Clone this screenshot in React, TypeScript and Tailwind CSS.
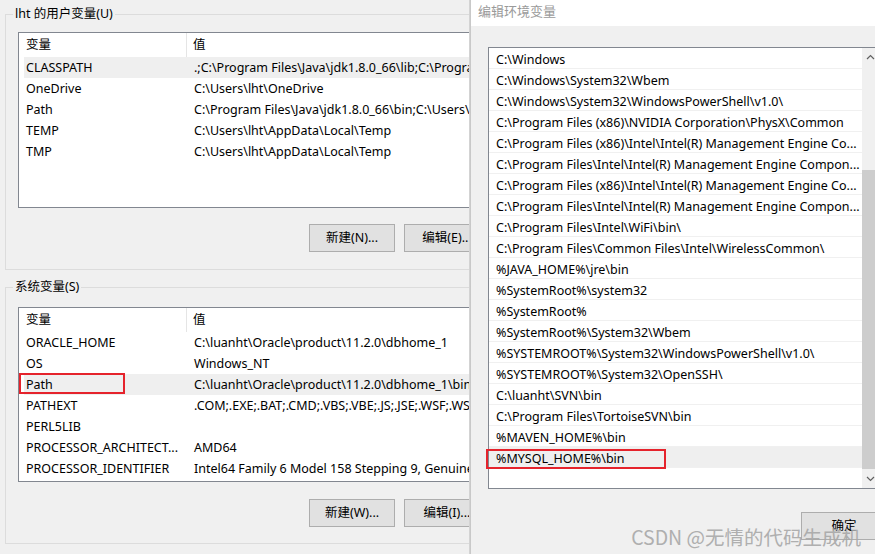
import React from "react";

const FONT = "font-['Noto_Sans','Noto_Sans_CJK_SC',sans-serif]";

type Row = [string, string];

const userVars: Row[] = [
  ["CLASSPATH", ".;C:\\Program Files\\Java\\jdk1.8.0_66\\lib;C:\\Program Files\\Java\\jdk1.8.0_66\\lib\\tools.jar"],
  ["OneDrive", "C:\\Users\\lht\\OneDrive"],
  ["Path", "C:\\Program Files\\Java\\jdk1.8.0_66\\bin;C:\\Users\\lht\\AppData\\Local\\Microsoft"],
  ["TEMP", "C:\\Users\\lht\\AppData\\Local\\Temp"],
  ["TMP", "C:\\Users\\lht\\AppData\\Local\\Temp"],
];

const sysVars: Row[] = [
  ["ORACLE_HOME", "C:\\luanht\\Oracle\\product\\11.2.0\\dbhome_1"],
  ["OS", "Windows_NT"],
  ["Path", "C:\\luanht\\Oracle\\product\\11.2.0\\dbhome_1\\bin;C:\\Windows\\system32"],
  ["PATHEXT", ".COM;.EXE;.BAT;.CMD;.VBS;.VBE;.JS;.JSE;.WSF;.WSH;.MSC"],
  ["PERL5LIB", ""],
  ["PROCESSOR_ARCHITECT...", "AMD64"],
  ["PROCESSOR_IDENTIFIER", "Intel64 Family 6 Model 158 Stepping 9, GenuineIntel"],
];

const paths = [
  "C:\\Windows",
  "C:\\Windows\\System32\\Wbem",
  "C:\\Windows\\System32\\WindowsPowerShell\\v1.0\\",
  "C:\\Program Files (x86)\\NVIDIA Corporation\\PhysX\\Common",
  "C:\\Program Files (x86)\\Intel\\Intel(R) Management Engine Co...",
  "C:\\Program Files\\Intel\\Intel(R) Management Engine Compon...",
  "C:\\Program Files (x86)\\Intel\\Intel(R) Management Engine Co...",
  "C:\\Program Files\\Intel\\Intel(R) Management Engine Compon...",
  "C:\\Program Files\\Intel\\WiFi\\bin\\",
  "C:\\Program Files\\Common Files\\Intel\\WirelessCommon\\",
  "%JAVA_HOME%\\jre\\bin",
  "%SystemRoot%\\system32",
  "%SystemRoot%",
  "%SystemRoot%\\System32\\Wbem",
  "%SYSTEMROOT%\\System32\\WindowsPowerShell\\v1.0\\",
  "%SYSTEMROOT%\\System32\\OpenSSH\\",
  "C:\\luanht\\SVN\\bin",
  "C:\\Program Files\\TortoiseSVN\\bin",
  "%MAVEN_HOME%\\bin",
  "%MYSQL_HOME%\\bin",
];

function Button({ label, className = "" }: { label: string; className?: string }) {
  return (
    <div
      className={`w-[86px] h-[28px] shrink-0 flex items-center justify-center bg-[#e1e1e1] border border-[#adadad] text-[12.5px] text-black ${className}`}
    >
      {label}
    </div>
  );
}

function VarList({ rows, highlight, boxed, height }: { rows: Row[]; highlight: number; boxed: number; height: string }) {
  return (
    <div className={`w-[620px] ${height} bg-white border border-[#828790] flex flex-col`}>
      <div className="h-[24px] flex items-stretch ml-[5px] text-[12.5px]">
        <div className="w-[163px] pl-[2px] border-r border-[#e5e5e5] flex items-center">变量</div>
        <div className="pl-[6px] flex items-center">值</div>
      </div>
      {rows.map((r, i) => (
        <div
          key={i}
          className={`relative h-[21px] ml-[5px] pt-[2px] flex items-center text-[12.5px] whitespace-nowrap ${
            i === highlight ? "bg-[#efefef]" : ""
          }`}
        >
          <div className="w-[168px] pl-[2px] shrink-0">{r[0]}</div>
          <div className="pl-[2px]">{r[1]}</div>
          {i === boxed && (
            <span className="absolute left-[-5px] top-[-1px] w-[106px] h-[21px] border-2 border-[#e5232c]" />
          )}
        </div>
      ))}
    </div>
  );
}

function Chevron({ up }: { up: boolean }) {
  return (
    <svg width="9" height="6" viewBox="0 0 9 6">
      <path
        d={up ? "M1 5 L4.5 1.5 L8 5" : "M1 1 L4.5 4.5 L8 1"}
        fill="none"
        stroke="#606060"
        strokeWidth="1.2"
      />
    </svg>
  );
}

export default function App() {
  return (
    <div className={`relative flex w-[875px] h-[554px] overflow-hidden bg-[#f0f0f0] text-black ${FONT}`}>
      {/* Left: environment variables window (partially covered) */}
      <div className="w-[469px] shrink-0 overflow-hidden">
        <div className="w-[640px] pl-[5px]">
          {/* User variables group */}
          <div className="relative mt-[14px] h-[256px] border border-[#dcdcdc] pt-[17px] pl-[12px]">
            <span className="absolute left-[7px] top-[-10px] px-[2px] bg-[#f0f0f0] text-[12.5px] leading-[18px]">
              lht 的用户变量(U)
            </span>
            <VarList rows={userVars} highlight={0} boxed={-1} height="h-[176px]" />
            <div className="flex gap-[9px] mt-[16px] pl-[291px]">
              <Button label="新建(N)..." />
              <Button label="编辑(E)..." />
            </div>
          </div>
          {/* System variables group */}
          <div className="relative mt-[17px] h-[257px] border border-[#dcdcdc] pt-[19px] pl-[12px]">
            <span className="absolute left-[7px] top-[-10px] px-[2px] bg-[#f0f0f0] text-[12.5px] leading-[18px]">
              系统变量(S)
            </span>
            <VarList rows={sysVars} highlight={2} boxed={2} height="h-[175px]" />
            <div className="flex gap-[9px] mt-[17px] pl-[291px]">
              <Button label="新建(W)..." />
              <Button label="编辑(I)..." />
            </div>
          </div>
        </div>
      </div>

      {/* Window edge shadow */}
      <div className="w-[2px] shrink-0 bg-gradient-to-r from-[#d8d8d8] to-[#c4c4c4]" />

      {/* Edit environment variable dialog */}
      <div className="flex-1 flex flex-col overflow-hidden">
        <div className="h-[26px] bg-white flex items-center pl-[7px] pb-[3px] text-[13px] text-[#9a9a9a] shrink-0">
          编辑环境变量
        </div>
        <div className="flex-1 pl-[17px] pt-[21px]">
          <div className="w-[420px] h-[442px] bg-white border border-[#828790] flex">
            <div className="w-[373px] shrink-0 flex flex-col">
              {paths.map((p, i) => (
                <div
                  key={i}
                  className={`relative h-[21px] shrink-0 border-b border-[#f0f0f0] flex items-center pl-[7px] pt-[4px] text-[12.5px] whitespace-nowrap ${
                    i === paths.length - 1 ? "bg-[#efefef]" : ""
                  }`}
                >
                  {p}
                  {i === paths.length - 1 && (
                    <span className="absolute left-[-3px] top-[2px] w-[180px] h-[20px] border-2 border-[#e5232c]" />
                  )}
                </div>
              ))}
            </div>
            <div className="w-[17px] shrink-0 bg-[#f0f0f0] flex flex-col">
              <div className="h-[17px] flex items-center justify-center shrink-0">
                <Chevron up />
              </div>
              <div className="h-[105px] shrink-0" />
              <div className="h-[299px] bg-[#cdcdcd] shrink-0" />
              <div className="h-[19px] flex items-center justify-center shrink-0">
                <Chevron up={false} />
              </div>
            </div>
          </div>
          <div className="mt-[23px] pl-[313px]">
            <Button label="确定" />
          </div>
        </div>
      </div>

      {/* CSDN watermark */}
      <div className="absolute right-[14px] bottom-[5px] text-[19.5px] leading-[24px] text-[#a8a8a8] opacity-90 font-['Noto_Sans_CJK_SC',sans-serif]">
        CSDN @无情的代码生成机
      </div>
    </div>
  );
}
